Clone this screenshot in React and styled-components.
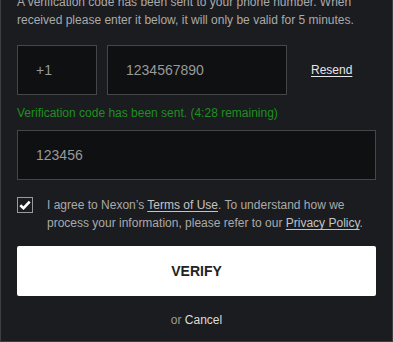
import React from 'react';
import styled, { createGlobalStyle } from 'styled-components';

const GlobalStyle = createGlobalStyle`
  html, body {
    margin: 0;
    padding: 0;
    background: #1b1c1f;
  }
  * { box-sizing: border-box; }
`;

const Panel = styled.div`
  width: 393px;
  height: 342px;
  overflow: hidden;
  background: #1b1c1f;
  border: 1px solid #3d3e41;
  border-top: none;
  padding: 0 16px;
  font-family: 'Liberation Sans', Arial, sans-serif;
  font-size: 12px;
  line-height: 18px;
  color: #aaaaaa;
`;

const Intro = styled.p`
  margin: -7px 0 0;
`;

const PhoneRow = styled.div`
  display: flex;
  align-items: center;
  gap: 10px;
  margin-top: 16px;
`;

const Field = styled.div`
  width: ${p => p.$width};
  height: 50px;
  display: flex;
  align-items: center;
  padding-left: 18px;
  background: #0f1011;
  border: 1px solid #45464a;
  font-size: 14px;
  color: #999999;
`;

const Resend = styled.a`
  margin-left: 14px;
  color: #e6e6e6;
  text-decoration: underline;
  text-underline-offset: 2px;
  cursor: pointer;
`;

const Status = styled.div`
  margin-top: 9px;
  color: #1f8f1f;
`;

const CodeField = styled(Field)`
  margin-top: 8px;
`;

const AgreeRow = styled.label`
  display: flex;
  gap: 14px;
  margin-top: 16px;
`;

const Box = styled.span`
  flex: none;
  width: 16px;
  height: 16px;
  margin-top: 1px;
  border: 1px solid #9a9a9a;
  display: flex;
  align-items: center;
  justify-content: center;
`;

const Link = styled.a`
  color: #c4c4c4;
  text-decoration: underline;
  text-underline-offset: 2px;
`;

const VerifyButton = styled.button`
  display: block;
  width: 100%;
  height: 50px;
  margin-top: 14px;
  border: none;
  border-radius: 2px;
  background: #ffffff;
  color: #222;
  font-family: inherit;
  font-size: 14px;
  font-weight: bold;
`;

const CancelLine = styled.div`
  margin-top: 15px;
  text-align: center;
  color: #9a9a9a;
  a { color: #dcdcdc; }
`;

export default function App() {
  return (
    <>
      <GlobalStyle />
      <Panel>
        <Intro>
          A verification code has been sent to your phone number. When received please enter it below, it will only be valid for 5 minutes.
        </Intro>
        <PhoneRow>
          <Field $width="80px">+1</Field>
          <Field $width="180px">1234567890</Field>
          <Resend>Resend</Resend>
        </PhoneRow>
        <Status>Verification code has been sent. (4:28 remaining)</Status>
        <CodeField $width="100%">123456</CodeField>
        <AgreeRow>
          <Box>
            <svg width="12" height="10" viewBox="0 0 12 10">
              <path d="M1.3 5.2 L4.5 8.2 L10.7 1.6" fill="none" stroke="#fff" strokeWidth="2.6" />
            </svg>
          </Box>
          <span>
            I agree to Nexon’s <Link>Terms of Use</Link>. To understand how we process your information, please refer to our <Link>Privacy Policy</Link>.
          </span>
        </AgreeRow>
        <VerifyButton>VERIFY</VerifyButton>
        <CancelLine>or <a>Cancel</a></CancelLine>
      </Panel>
    </>
  );
}
